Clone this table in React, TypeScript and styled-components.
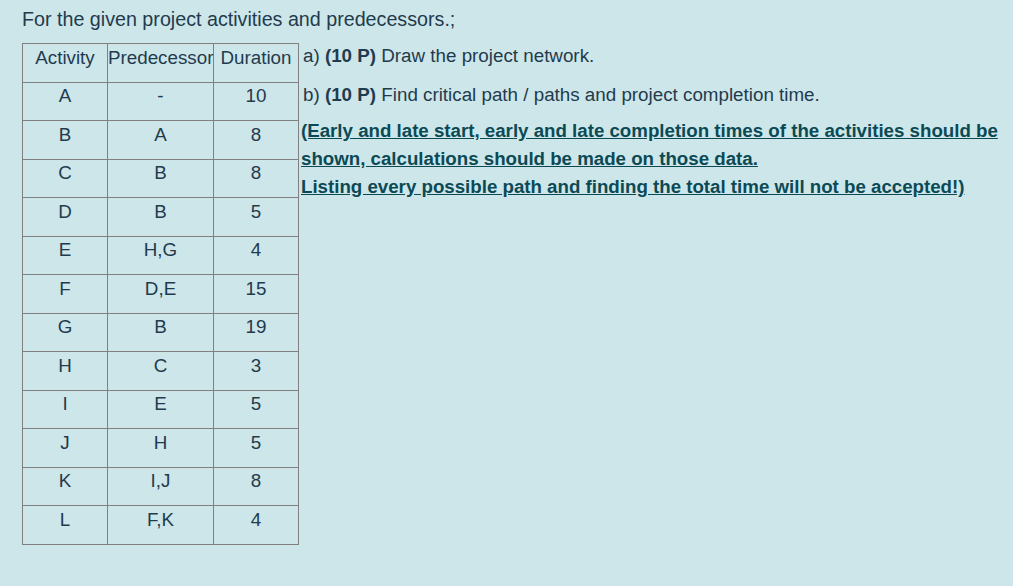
import styled, { createGlobalStyle } from 'styled-components';

const GlobalStyle = createGlobalStyle`
  html, body {
    margin: 0;
    padding: 0;
    background: #cde6ea;
  }
  body {
    font-family: "Liberation Sans", Arial, sans-serif;
    color: #1f3b4d;
  }
`;

const Page = styled.div`
  width: 1013px;
  height: 586px;
  box-sizing: border-box;
  padding: 8px 0 0 22px;
  background: #cde6ea;
`;

const Title = styled.div`
  font-size: 19.7px;
  line-height: 22px;
  height: 22px;
  margin-bottom: 13px;
  white-space: nowrap;
`;

const Body = styled.div`
  display: flex;
  align-items: flex-start;
`;

const Table = styled.table`
  border-collapse: collapse;
  table-layout: fixed;
  width: 277px;
  font-size: 18.8px;
`;

const Cell = styled.td<{ $width: number }>`
  width: ${({ $width }) => $width}px;
  height: 38.5px;
  box-sizing: border-box;
  padding: 1px 0 11px;
  border: 1px solid #808080;
  text-align: center;
  vertical-align: middle;
  line-height: 22px;
  white-space: nowrap;
  overflow: visible;
`;

const Notes = styled.div`
  padding-left: 4px;
  font-size: 18.8px;
`;

const Task = styled.div<{ $top: number }>`
  line-height: 26px;
  margin-top: ${({ $top }) => $top}px;
  white-space: nowrap;
`;

const Warning = styled.div`
  margin-top: 9px;
  margin-left: -2px;
  font-size: 18.7px;
  line-height: 28px;
  font-weight: bold;
  color: #0b4a55;
  text-decoration: underline;
  white-space: nowrap;
`;

const widths = [85, 106, 85];

const rows: [string, string, string][] = [
  ['A', '-', '10'],
  ['B', 'A', '8'],
  ['C', 'B', '8'],
  ['D', 'B', '5'],
  ['E', 'H,G', '4'],
  ['F', 'D,E', '15'],
  ['G', 'B', '19'],
  ['H', 'C', '3'],
  ['I', 'E', '5'],
  ['J', 'H', '5'],
  ['K', 'I,J', '8'],
  ['L', 'F,K', '4'],
];

export default function App() {
  return (
    <Page>
      <GlobalStyle />
      <Title>For the given project activities and predecessors.;</Title>
      <Body>
        <Table>
          <tbody>
            <tr>
              {['Activity', 'Predecessor', 'Duration'].map((h, i) => (
                <Cell key={h} $width={widths[i]}>{h}</Cell>
              ))}
            </tr>
            {rows.map((r) => (
              <tr key={r[0]}>
                {r.map((v, i) => (
                  <Cell key={i} $width={widths[i]}>{v}</Cell>
                ))}
              </tr>
            ))}
          </tbody>
        </Table>
        <Notes>
          <Task $top={0}>a) <b>(10 P)</b> Draw the project network.</Task>
          <Task $top={13}>b) <b>(10 P)</b> Find critical path / paths and project completion time.</Task>
          <Warning>
            (Early and late start, early and late completion times of the activities should be
            <br />
            shown, calculations should be made on those data.
            <br />
            Listing every possible path and finding the total time will not be accepted!)
          </Warning>
        </Notes>
      </Body>
    </Page>
  );
}
